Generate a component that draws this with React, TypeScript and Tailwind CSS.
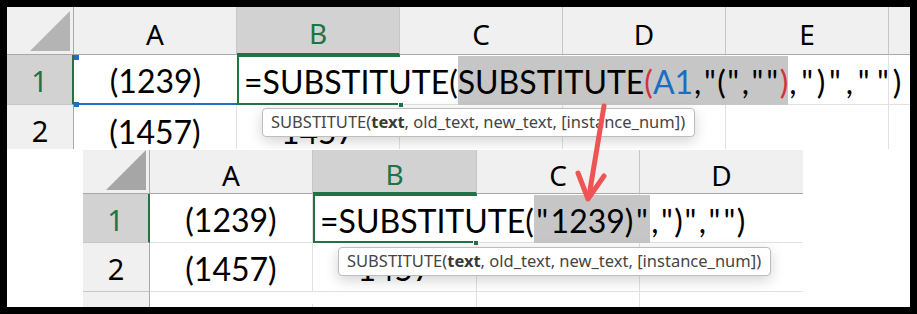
import React from "react";

const cellFont = { fontFamily: "Lato, 'Noto Sans', sans-serif" };
const hdrFont = { fontFamily: "'Noto Sans', 'Open Sans', sans-serif" };

function Corner({ dark }: { dark?: boolean }) {
  return (
    <div className="relative bg-[#f0f0f0] border-r border-b border-[#a8a8a8]">
      <svg className="absolute right-[3px] bottom-[3px]" width="40" height="40" viewBox="0 0 40 40">
        <polygon points="40,0 40,40 0,40" fill={dark ? "#a6a6a6" : "#b4b4b4"} />
      </svg>
    </div>
  );
}

function ColHead({ label, active, last }: { label: string; active?: boolean; last?: boolean }) {
  return (
    <div
      className={
        "flex items-center justify-center pt-[6px] text-[28px] leading-none border-b " +
        (last ? "" : "border-r ") +
        (active
          ? "bg-[#d2d2d2] text-[#217346] border-b-2 border-b-[#217346] border-r-[#c6c6c6]"
          : "bg-[#f0f0f0] text-black border-b-[#a8a8a8] border-r-[#c6c6c6]")
      }
      style={hdrFont}
    >
      {label}
    </div>
  );
}

function RowHead({ label, active }: { label: string; active?: boolean }) {
  return (
    <div
      className={
        "flex items-center justify-center pt-[2px] text-[29px] leading-none border-b border-b-[#c6c6c6] " +
        (active
          ? "bg-[#d2d2d2] text-[#217346] border-r-2 border-r-[#217346]"
          : "bg-[#f0f0f0] text-black border-r border-r-[#a8a8a8]")
      }
      style={hdrFont}
    >
      {label}
    </div>
  );
}

function Cell({ text, className = "" }: { text?: string; className?: string }) {
  return (
    <div
      className={"flex items-center justify-center pt-[4px] text-[32px] leading-none text-black border-r border-b border-[#e1e1e1] bg-white " + className}
      style={cellFont}
    >
      {text}
    </div>
  );
}

function Tooltip({ className }: { className: string }) {
  return (
    <div
      className={
        "absolute h-[29px] w-[433px] bg-white border border-[#bdbdbd] rounded-[4px] shadow-[0_4px_14px_rgba(0,0,0,0.18)] flex items-center pl-[8px] text-[16.5px] text-[#454545] whitespace-nowrap z-20 " +
        className
      }
      style={{ fontFamily: "'Noto Sans', 'Open Sans', sans-serif" }}
    >
      SUBSTITUTE(<b className="font-bold text-[#3a3a3a]">text</b>, old_text, new_text, [instance_num])
    </div>
  );
}

function Q() {
  return <span className="mx-[2.5px]">"</span>;
}
function Qs() {
  return <span className="mx-[1.5px]">"</span>;
}
function Ql() {
  return <span className="mx-[3.75px]">"</span>;
}

function C() {
  return <span className="mx-[1px]">,</span>;
}

function Caret() {
  return <span className="inline-block w-[2px] h-[42px] bg-black align-middle" />;
}

export default function App() {
  return (
    <div className="w-[917px] h-[314px] bg-black p-[7px] relative">
      <div className="w-[903px] h-[300px] bg-white overflow-hidden">
        {/* Outer sheet */}
        <div className="relative h-[142px] overflow-hidden">
          <div className="grid grid-cols-[67px_163px_163px_163px_163px_163px_21px] grid-rows-[48px_50px_50px]">
            <Corner />
            <ColHead label="A" />
            <ColHead label="B" active />
            <ColHead label="C" />
            <ColHead label="D" />
            <ColHead label="E" />
            <div className="bg-[#f0f0f0] border-b border-[#a8a8a8]" />

            <RowHead label="1" active />
            <div className="relative">
              <Cell text="(1239)" className="h-full bg-[#e6eff8] border-b-2 border-b-[#1f6fc4] border-r-0" />
              <span className="absolute left-0 top-0 w-[5px] h-[5px] bg-[#1f6fc4]" />
              <span className="absolute left-0 bottom-[-2px] w-[5px] h-[5px] bg-[#1f6fc4]" />
            </div>
            <div
              className="relative z-10 flex items-center border-l-2 border-t-2 border-b-2 border-[#217346] pl-[5px] text-[32px] text-black whitespace-nowrap"
              style={cellFont}
            >
              <span className="leading-[46px] pt-[3px]">=SUBSTITUTE(</span>
              <Caret />
              <span className="leading-[46px] pt-[3px] bg-[#c6c6c6] inline-block">
                SUBSTITUTE<span className="text-[#d13438]">(</span>
                <span className="text-[#1a6ec2]">A1</span>
                <C />
                <Qs />(<Qs />
                <C />
                <Qs />
                <Qs />
                <span className="text-[#d13438]">)</span>
              </span>
              <span className="leading-[46px] pt-[3px]">
                <C />
                <Ql />)<Ql />
                <C />
                <Ql />
                <Ql />)
              </span>
              <span className="absolute right-[-4px] bottom-[-5px] w-[6px] h-[6px] bg-[#217346] border border-white" />
            </div>
            <Cell />
            <Cell />
            <Cell />
            <Cell className="border-r-0" />

            <RowHead label="2" />
            <Cell text="(1457)" />
            <Cell text="1457" />
            <Cell />
            <Cell />
            <Cell />
            <Cell className="border-r-0" />
          </div>
          <Tooltip className="left-[255px] top-[101px]" />
        </div>

        {/* Inner sheet */}
        <div className="relative ml-[76px] mt-[1px] w-[720px] h-[157px] overflow-hidden">
          <div className="grid grid-cols-[67px_163px_164px_163px_163px] grid-rows-[44px_49px_49px_49px]">
            <Corner dark />
            <ColHead label="A" />
            <ColHead label="B" active />
            <ColHead label="C" />
            <ColHead label="D" last />

            <RowHead label="1" active />
            <Cell text="(1239)" />
            <div
              className="relative z-10 flex items-center border-2 border-r-0 border-[#217346] pl-[5px] text-[32px] text-black whitespace-nowrap"
              style={cellFont}
            >
              <span className="leading-[45px] pt-[3px]">=SUBSTITUTE(</span>
              <span className="leading-[45px] pt-[3px] bg-[#c6c6c6] inline-block">
                <Q />1239)<Q />
              </span>
              <Caret />
              <span className="leading-[45px] pt-[3px]">
                <C />
                <Qs />)<Qs />
                <C />
                <Qs />
                <Qs />)
              </span>
              <span className="absolute right-[-2px] bottom-[-5px] w-[6px] h-[6px] bg-[#217346] border border-white" />
            </div>
            <Cell />
            <Cell className="border-r-0" />

            <RowHead label="2" />
            <Cell text="(1457)" />
            <Cell text="1457" />
            <Cell />
            <Cell className="border-r-0" />

            <RowHead label="3" />
            <Cell text="(1564)" className="items-end translate-y-[12px]" />
            <Cell />
            <Cell />
            <Cell className="border-r-0" />
          </div>
          <Tooltip className="left-[255px] top-[97px]" />
        </div>
      </div>

      <svg className="absolute left-0 top-0 pointer-events-none z-30" width="917" height="314">
        <g stroke="#ef5454" strokeWidth="5" strokeLinecap="round" fill="none">
          <line x1="604" y1="106" x2="589" y2="196" />
          <polyline points="578,173 588,199 604,176" strokeLinejoin="round" />
        </g>
      </svg>
    </div>
  );
}
